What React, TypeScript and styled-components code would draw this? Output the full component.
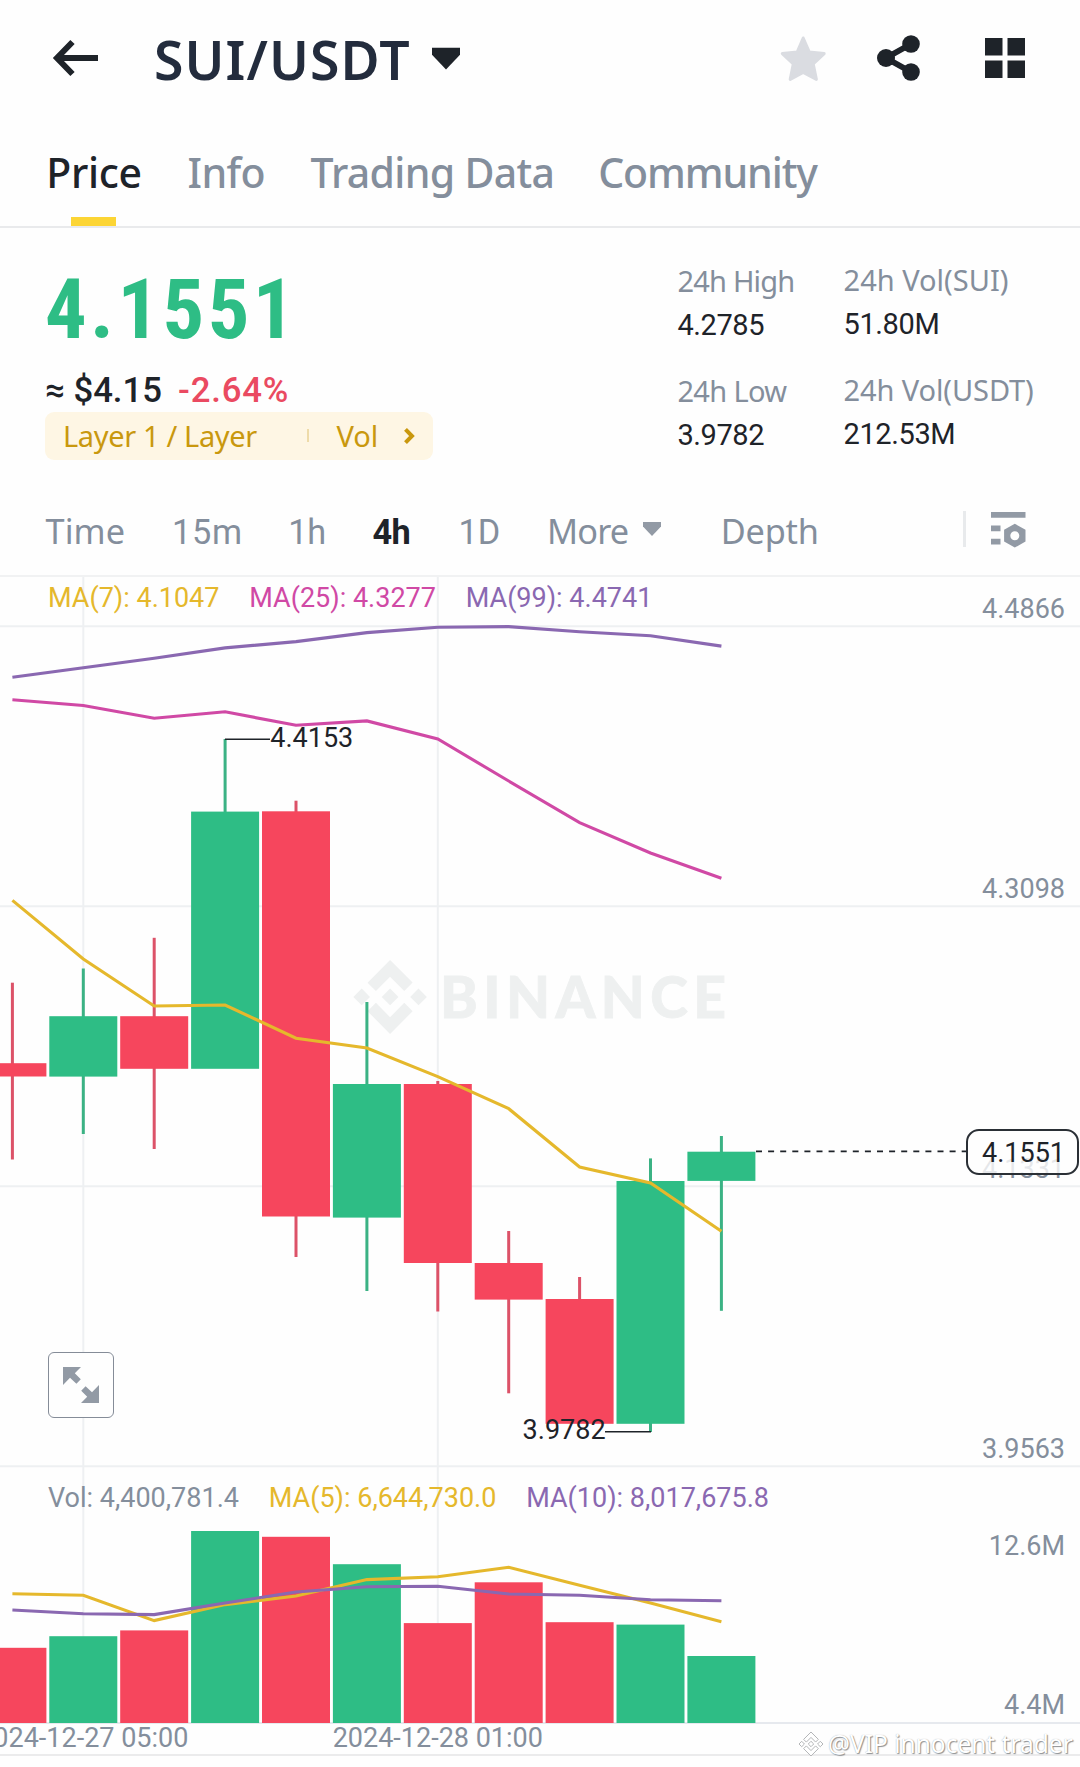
import React from "react";
import styled, { createGlobalStyle } from "styled-components";

const GREEN = "#2ebd85";
const RED = "#f6465d";
const YELLOW = "#e5b82c";
const PINK = "#d049a5";
const PURPLE = "#8a68b1";
const INK = "#1e2329";
const MUTED = "#848e9c";
const NUMERIC = '"Roboto", "Liberation Sans", sans-serif';
const TEXT = '"Noto Sans", "Open Sans", sans-serif';

const GlobalStyle = createGlobalStyle`
  *, *::before, *::after { box-sizing: border-box; }
  body { margin: 0; background: #fefefe; }
`;

const Screen = styled.div`
  width: 1080px;
  height: 1767px;
  overflow: hidden;
  display: flex;
  flex-direction: column;
  background: #fefefe;
  color: ${INK};
  font-family: ${TEXT};
  white-space: pre;
`;

/* Header */

const Header = styled.header`
  height: 116px;
  padding: 0 54.5px 0 53px;
  display: flex;
  align-items: center;
`;

const PairButton = styled.div`
  margin-left: 56px;
  display: flex;
  align-items: center;
  gap: 19px;
`;

const PairName = styled.h1`
  margin: 0;
  padding-top: 3px;
  width: 259px;
  font-size: 53.5px;
  line-height: 60px;
  font-weight: 600;
  letter-spacing: 1.1px;
  color: #232c3d;
`;

const Actions = styled.div`
  margin-left: auto;
  display: grid;
  grid-template-columns: 96px 107.5px 41px;
  align-items: center;
`;

const Glyph = styled.svg`
  display: block;
  overflow: visible;
`;

/* Tabs */

const Tabs = styled.nav`
  height: 112px;
  padding: 31px 0 0 46.2px;
  display: grid;
  grid-template-columns: 141.4px 123px 287.6px auto;
  border-bottom: 2px solid #e9eaec;
`;

const Tab = styled.div<{ $active?: boolean; $tracking: number }>`
  display: flex;
  flex-direction: column;
  justify-content: space-between;
  font-size: 41px;
  line-height: 50px;
  font-weight: 500;
  letter-spacing: ${(p) => p.$tracking}px;
  color: ${(p) => (p.$active ? INK : MUTED)};
`;

const Underline = styled.div`
  width: 45px;
  height: 9px;
  margin-left: 24.8px;
  background: #fcd535;
`;

/* Ticker summary */

const Summary = styled.section`
  height: 262px;
  display: grid;
  grid-template-columns: 632.4px 166.2px auto;
  padding-left: 45px;
  align-items: start;
`;

const Quote = styled.div`
  padding-top: 34px;
  display: flex;
  flex-direction: column;
`;

const LastPrice = styled.div`
  font: 700 82.5px / 96px "Roboto Condensed", ${NUMERIC};
  letter-spacing: 3.4px;
  color: ${GREEN};
`;

const Change = styled.div`
  margin-top: 11px;
  display: grid;
  grid-template-columns: 133px auto;
  font: 500 34.7px / 42px ${NUMERIC};
`;

const Percent = styled.span`
  letter-spacing: 0.85px;
  color: #ea4a61;
`;

const TagBar = styled.div`
  margin-top: 1px;
  width: 387.5px;
  height: 47.5px;
  padding: 0 18px;
  border-radius: 9px;
  display: flex;
  align-items: center;
  background: #fef6e4;
  color: #c9980e;
  font-size: 29px;
  line-height: 40px;
`;

const TagName = styled.span`
  width: 244px;
  letter-spacing: -0.35px;
`;

const TagDivider = styled.i`
  width: 2px;
  height: 13px;
  margin-right: 27.5px;
  background: #eedba9;
`;

const TagLink = styled.span`
  width: 67px;
`;

const StatColumn = styled.div<{ $top: number }>`
  padding-top: ${(p) => p.$top}px;
  display: flex;
  flex-direction: column;
  gap: 25.8px;
`;

const Stat = styled.div`
  display: flex;
  flex-direction: column;
  gap: 4px;
`;

const StatLabel = styled.span<{ $tracking: number }>`
  font-size: 29px;
  line-height: 40px;
  letter-spacing: ${(p) => p.$tracking}px;
  color: ${MUTED};
`;

const StatValue = styled.span`
  font: 400 29px / 40px ${NUMERIC};
  letter-spacing: -0.4px;
`;

/* Interval selector */

const IntervalBar = styled.nav`
  height: 87px;
  padding: 16.2px 54.5px 0 45.5px;
  display: flex;
  border-bottom: 2px solid #f1f2f3;
`;

const Intervals = styled.div`
  flex: 1;
  display: grid;
  grid-template-columns: 126.6px 116.2px 84.1px 86.1px 88.5px 96.2px 77.6px auto;
  align-items: baseline;
  justify-content: start;
  height: 50px;
`;

const Interval = styled.span<{ $active?: boolean; $numeric?: boolean; $tracking: number }>`
  font-family: ${(p) => (p.$numeric ? NUMERIC : TEXT)};
  font-size: 34.3px;
  line-height: 50px;
  font-weight: ${(p) => (p.$active ? 700 : 400)};
  letter-spacing: ${(p) => p.$tracking}px;
  color: ${(p) => (p.$active ? INK : MUTED)};
`;

const MoreCaret = styled(Glyph)`
  align-self: start;
  margin-top: 15.8px;
`;

const IndicatorTools = styled.div`
  display: flex;
  gap: 25px;
  padding-top: 5.2px;
`;

const ToolDivider = styled.i`
  width: 3px;
  height: 35.5px;
  background: #e8eaec;
`;

/* Chart */

const ChartArea = styled.section`
  position: relative;
  flex: 1;
`;

const Canvas = styled.svg`
  display: block;
  width: 1080px;
  height: 1190px;
`;

const Legend = styled.div<{ $top: number }>`
  position: absolute;
  top: ${(p) => p.$top}px;
  left: 48px;
  display: flex;
  gap: 29.8px;
  font: 400 27px / 32px ${NUMERIC};
`;

const LegendItem = styled.span<{ $color: string }>`
  color: ${(p) => p.$color};
`;

const ExpandButton = styled.button`
  position: absolute;
  left: 48px;
  top: 774.5px;
  width: 66px;
  height: 66px;
  padding: 0;
  display: grid;
  place-items: center;
  border: 1.6px solid #858c98;
  border-radius: 6px;
  background: #fefefe;
`;

const CurrentPrice = styled.div`
  position: absolute;
  left: 966px;
  top: 551.5px;
  width: 113px;
  height: 46px;
  padding-left: 14px;
  border: 2px solid #2a2f35;
  border-radius: 13px;
  background: rgba(254, 254, 254, 0.8);
  font: 400 27px / 44px ${NUMERIC};
`;

const Author = styled.div`
  position: absolute;
  left: 796px;
  bottom: 6px;
  display: flex;
  align-items: center;
  gap: 2px;
  font: 400 24.5px / 34px ${TEXT};
  color: #fff;
  text-shadow: 1px 1px 1px rgba(70, 75, 80, 0.6), 0 0 1px rgba(70, 75, 80, 0.45);
`;

const LOGO =
  "M16.624 13.9202l2.7175 2.7154-7.353 7.353-7.353-7.352 2.7175-2.7164 4.6355 4.6595 4.6356-4.6595zm4.6366-4.6366L24 12l-2.7154 2.7164L18.5682 12l2.6924-2.7164zm-9.272.001l2.7163 2.6914-2.7164 2.7174v-.001L9.2721 12l2.7164-2.7154zm-9.2722-.001L5.4088 12l-2.6914 2.6924L0 12l2.7164-2.7164zM11.9885.0115l7.353 7.329-2.7174 2.7154-4.6356-4.6356-4.6355 4.6595-2.7174-2.7154 7.353-7.353z";

type Candle = { up: boolean; top: number; bottom: number; high: number; low: number; volume: number };

const candles: Candle[] = [
  { up: false, top: 1063.2, bottom: 1076.5, high: 982.7, low: 1159.5, volume: 1647.8 },
  { up: true, top: 1016.2, bottom: 1076.6, high: 968.5, low: 1134, volume: 1636.2 },
  { up: false, top: 1016.2, bottom: 1068.8, high: 937.8, low: 1149, volume: 1630.4 },
  { up: true, top: 811.6, bottom: 1068.8, high: 739, low: 1068, volume: 1531 },
  { up: false, top: 811.3, bottom: 1216.5, high: 800.7, low: 1257, volume: 1536.8 },
  { up: true, top: 1084, bottom: 1217.6, high: 1002, low: 1291, volume: 1564.2 },
  { up: false, top: 1084, bottom: 1263, high: 1081, low: 1311.5, volume: 1623.1 },
  { up: false, top: 1263, bottom: 1299.6, high: 1231, low: 1393.3, volume: 1582.3 },
  { up: false, top: 1299, bottom: 1423.8, high: 1277, low: 1423, volume: 1622.2 },
  { up: true, top: 1181, bottom: 1423.8, high: 1158.4, low: 1432, volume: 1624.6 },
  { up: true, top: 1151.7, bottom: 1180.9, high: 1136, low: 1310.8, volume: 1656 },
];

const center = (i: number) => 12.4 + i * 70.9;
const polyline = (ys: number[]) => ys.map((y, i) => `${center(i).toFixed(1)},${y}`).join(" ");

const priceLines = [
  { color: PURPLE, ys: [677.3, 667.7, 658.3, 647.9, 641.6, 632.6, 627.2, 626.6, 631.8, 635.7, 646.1] },
  { color: PINK, ys: [699.8, 705.5, 718.3, 711.8, 725.3, 720.9, 739, 781, 822.6, 853, 878.3] },
  { color: YELLOW, ys: [900.4, 959, 1006, 1005, 1038.2, 1048, 1076.6, 1108.7, 1167, 1183, 1231.3] },
];
const volumeLines = [
  { color: YELLOW, ys: [1593.7, 1595.3, 1620.6, 1604.6, 1596, 1579.6, 1576.8, 1567.3, 1585.3, 1603, 1621.7] },
  { color: PURPLE, ys: [1610, 1613.7, 1614.6, 1603, 1592, 1586.8, 1586.3, 1594, 1595.3, 1599.7, 1600.7] },
];
const axisLabels: [string, number][] = [
  ["4.4866", 618],
  ["4.3098", 898],
  ["4.1331", 1178],
  ["3.9563", 1458],
  ["12.6M", 1555],
  ["4.4M", 1714],
];

function Chart() {
  return (
    <Canvas viewBox="0 577 1080 1190" fontFamily="Roboto, Liberation Sans, sans-serif" fontSize="27">
      <g stroke="#eef0f2" strokeWidth="2">
        {[626.3, 906.3, 1186.3, 1466.3].map((y) => (
          <line key={y} x1="0" x2="1080" y1={y} y2={y} />
        ))}
        {[83.3, 437.8].map((x) => (
          <line key={x} x1={x} x2={x} y1="577" y2="1723" />
        ))}
        <line x1="0" x2="1080" y1="1723" y2="1723" stroke="#e6e9ee" />
        <line x1="0" x2="1080" y1="1755" y2="1755" stroke="#ebebec" />
      </g>

      <g fill="#eef0f0">
        <path d={LOGO} transform="translate(353.4 960) scale(3.06 3.08)" />
        <text
          x="440"
          y="1017.8"
          fontFamily="Lato, sans-serif"
          fontWeight="900"
          fontSize="57"
          letterSpacing="5.4"
          stroke="#eef0f0"
          strokeWidth="0.8"
        >
          BINANCE
        </text>
      </g>

      {candles.map((c, i) => (
        <g key={i} fill={c.up ? GREEN : RED}>
          <rect x={center(i) - 1.5} y={c.high} width="3" height={c.low - c.high} fill={c.up ? "#3bb284" : "#dc5268"} />
          <rect x={center(i) - 34} y={c.top} width="68" height={c.bottom - c.top} />
          <rect x={center(i) - 34} y={c.volume} width="68" height={1723 - c.volume} />
        </g>
      ))}

      <g fill="none" strokeWidth="3.1">
        {[...priceLines, ...volumeLines].map((l, i) => (
          <polyline key={i} points={polyline(l.ys)} stroke={l.color} />
        ))}
      </g>

      <g stroke={INK} strokeWidth="1.6">
        <line x1="225" x2="270" y1="739.3" y2="739.3" />
        <line x1="605" x2="651" y1="1431.8" y2="1431.8" />
        <line x1="756" x2="966" y1="1151.4" y2="1151.4" strokeDasharray="6 6.1" />
      </g>
      <g fill={INK}>
        <text x="270.3" y="747">4.4153</text>
        <text x="522.6" y="1439">3.9782</text>
      </g>

      <g fill={MUTED}>
        {axisLabels.map(([t, y]) => (
          <text key={t} x="1065" y={y} textAnchor="end">
            {t}
          </text>
        ))}
        <text x="83.3" y="1747" textAnchor="middle">2024-12-27 05:00</text>
        <text x="437.8" y="1747" textAnchor="middle">2024-12-28 01:00</text>
      </g>
    </Canvas>
  );
}

export default function App() {
  return (
    <Screen>
      <GlobalStyle />
      <Header>
        <Glyph width="45" height="36" viewBox="0 0 45 36" fill="none" stroke={INK} strokeWidth="6">
          <path d="M45 18H4M19.5 2L4 18l15.5 16" />
        </Glyph>
        <PairButton>
          <PairName>SUI/USDT</PairName>
          <Glyph width="28" height="22" viewBox="0 0 28 22" fill={INK}>
            <path d="M0 .7h28v7L14 22.500 0 7.700z" />
          </Glyph>
        </PairButton>
        <Actions>
          <Glyph width="45" height="45" viewBox="0 0 45 45" fill="#dadce1" stroke="#dadce1" strokeWidth="3" strokeLinejoin="round">
            <path d="M22.2 2l6 13.9 15 1.7-11 10.3 3.2 15.5-13.2-7-13 7 3.1-15.5-11-10.3 15-1.7z" />
          </Glyph>
          <Glyph width="43" height="46" viewBox="0 0 43 46" fill={INK}>
            <path d="M34 9L9 23l25 14" fill="none" stroke={INK} strokeWidth="6" />
            <circle cx="34" cy="9" r="8.8" />
            <circle cx="9" cy="23" r="9" />
            <circle cx="34" cy="37" r="8.8" />
          </Glyph>
          <Glyph width="41" height="41" viewBox="0.5 0.5 41 41" fill={INK}>
            <path d="M.5.5h17.5v17.5H.5zM23 .5h17.500v17.500H23zM.5 23h17.500v17.500H.5zM23 23h17.500v17.500H23z" />
          </Glyph>
        </Actions>
      </Header>

      <Tabs>
        <Tab $active $tracking={-0.3}>
          Price
          <Underline />
        </Tab>
        <Tab $tracking={-0.62}>Info</Tab>
        <Tab $tracking={-0.67}>Trading Data</Tab>
        <Tab $tracking={-1.1}>Community</Tab>
      </Tabs>

      <Summary>
        <Quote>
          <LastPrice>4.1551</LastPrice>
          <Change>
            <span>≈ $4.15</span>
            <Percent>-2.64%</Percent>
          </Change>
          <TagBar>
            <TagName>Layer 1 / Layer</TagName>
            <TagDivider />
            <TagLink>Vol</TagLink>
            <Glyph width="11" height="16" viewBox="0 0 11 16" fill="none" stroke="#c9980e" strokeWidth="4">
              <path d="M1.500 1.300L8 8l-6.500 6.700" />
            </Glyph>
          </TagBar>
        </Quote>
        <StatColumn $top={33.3}>
          <Stat>
            <StatLabel $tracking={-0.78}>24h High</StatLabel>
            <StatValue>4.2785</StatValue>
          </Stat>
          <Stat>
            <StatLabel $tracking={-0.65}>24h Low</StatLabel>
            <StatValue>3.9782</StatValue>
          </Stat>
        </StatColumn>
        <StatColumn $top={31.9}>
          <Stat>
            <StatLabel $tracking={0}>24h Vol(SUI)</StatLabel>
            <StatValue>51.80M</StatValue>
          </Stat>
          <Stat>
            <StatLabel $tracking={-0.1}>24h Vol(USDT)</StatLabel>
            <StatValue>212.53M</StatValue>
          </Stat>
        </StatColumn>
      </Summary>

      <IntervalBar>
        <Intervals>
          <Interval $tracking={0.1}>Time</Interval>
          <Interval $numeric $tracking={0.62}>15m</Interval>
          <Interval $numeric $tracking={-0.28}>1h</Interval>
          <Interval $numeric $active $tracking={-0.6}>4h</Interval>
          <Interval $numeric $tracking={0}>1D</Interval>
          <Interval $tracking={-0.81}>More</Interval>
          <MoreCaret width="18" height="14" viewBox="0 0 18 14" fill="#929aa5">
            <path d="M0 0h18v4.500L9 14 0 4.500z" />
          </MoreCaret>
          <Interval $tracking={-0.21}>Depth</Interval>
        </Intervals>
        <IndicatorTools>
          <ToolDivider />
          <Glyph width="34.5" height="37" viewBox="0 0 34.5 37" fill="#929aa5">
            <path d="M0 1h34.500v5.700H0zM0 14.600h9.500v5.700H0zM0 27.700h9.500v5.700H0z" />
            <path
              fillRule="evenodd"
              d="M23.800 12.800l10.700 6v11.800l-10.700 6-10.700-6V18.800zM23.800 20.200a4.500 4.500 0 1 0 0 9 4.500 4.500 0 1 0 0-9z"
            />
          </Glyph>
        </IndicatorTools>
      </IntervalBar>

      <ChartArea>
        <Chart />
        <Legend $top={4.5}>
          <LegendItem $color={YELLOW}>MA(7): 4.1047</LegendItem>
          <LegendItem $color={PINK}>MA(25): 4.3277</LegendItem>
          <LegendItem $color={PURPLE}>MA(99): 4.4741</LegendItem>
        </Legend>
        <Legend $top={904.5}>
          <LegendItem $color={MUTED}>Vol: 4,400,781.4</LegendItem>
          <LegendItem $color={YELLOW}>MA(5): 6,644,730.0</LegendItem>
          <LegendItem $color={PURPLE}>MA(10): 8,017,675.8</LegendItem>
        </Legend>
        <ExpandButton aria-label="Expand chart">
          <Glyph width="36" height="36" viewBox="0 0 36 36" fill="#929aa5">
            <path d="M0 0h18l-6.200 6.200 6 6-4.400 4.600-6.400-6L0 18z" />
            <path d="M36 36H18l6.200-6.200-6-6 4.400-4.600 6.400 6L36 18z" />
          </Glyph>
        </ExpandButton>
        <CurrentPrice>4.1551</CurrentPrice>
        <Author>
          <Glyph width="30" height="26" viewBox="-1 -1 26 26" fill="#fff" stroke="#b4b6b8" strokeWidth="1">
            <path d={LOGO} />
          </Glyph>
          @VIP innocent trader
        </Author>
      </ChartArea>
    </Screen>
  );
}
